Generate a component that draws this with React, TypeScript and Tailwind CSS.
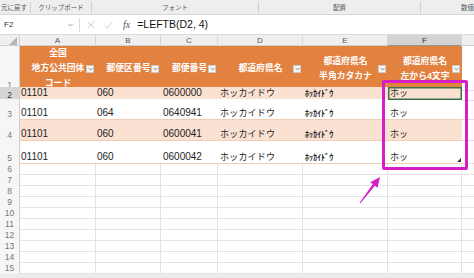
import React from "react";

const grid = "grid grid-cols-[20px_76px_65px_57px_85px_85px_74px_12px]";
const jp = "font-['Liberation_Sans','Noto_Sans_CJK_JP',sans-serif]";

type DataRow = { n: number; h: string; band: boolean; ku: string; zip: string };

const rows: DataRow[] = [
  { n: 2, h: "h-[12px]", band: true, ku: "060", zip: "0600000" },
  { n: 3, h: "h-[21px]", band: false, ku: "064", zip: "0640941" },
  { n: 4, h: "h-[21px]", band: true, ku: "060", zip: "0600041" },
  { n: 5, h: "h-[23px]", band: false, ku: "060", zip: "0600042" },
];

function Drop() {
  return (
    <span className="absolute right-[2px] top-1/2 -translate-y-1/2 w-[8px] h-[8px] bg-[#f7f7f7] border border-[#c9c9c9] flex items-center justify-center">
      <svg width="5" height="4" viewBox="0 0 5 4">
        <path d="M0.6 1 L2.5 2.9 L4.4 1" fill="none" stroke="#6b7a8c" strokeWidth="0.9" />
      </svg>
    </span>
  );
}

function Head({ children }: { children: React.ReactNode }) {
  return (
    <div className="relative flex items-center justify-center text-center text-white font-bold text-[8.8px] leading-[15px] whitespace-nowrap">
      <div>{children}</div>
      <Drop />
    </div>
  );
}

function RowNum({ n, sel, h }: { n: number | string; sel?: boolean; h?: string }) {
  return (
    <div className={`${h ?? ""} flex items-end justify-center text-[8.5px] leading-[11px] border-r border-[#cfcfcf] ${sel ? "bg-[#d6d6d6] text-[#333]" : "bg-[#f6f6f6] text-[#777]"}`}>
      {n}
    </div>
  );
}

export default function App() {
  const ribbon = [
    { w: "w-[31px]", label: "元に戻す", cls: "justify-start pl-[1px]" },
    { w: "w-[61px]", label: "クリップボード", cls: "justify-center" },
    { w: "w-[167px]", label: "フォント", cls: "justify-center" },
    { w: "w-[162px]", label: "配置", cls: "justify-center" },
    { w: "flex-1", label: "数値", cls: "justify-end pr-[0px]" },
  ];
  const letters = ["A", "B", "C", "D", "E", "F"];
  const empty = [6, 7, 8, 9, 10, 11, 12, 13, 14, 15];

  return (
    <div className={`relative w-[474px] h-[278px] overflow-hidden bg-white ${jp}`}>
      {/* ribbon group labels */}
      <div className="flex h-[15px] bg-[#eeeeee] border-b border-[#d6d6d6]">
        {ribbon.map((r, i) => (
          <div key={i} className={`${r.w} flex items-center ${r.cls} text-[6.5px] text-[#555] ${i < 4 ? "border-r border-[#cfcfcf]" : ""} mb-[1px] mt-[2px]`}>
            {r.label}
          </div>
        ))}
      </div>

      {/* formula bar */}
      <div className="flex items-center h-[20px] bg-white border-b border-[#dcdcdc]">
        <div className="w-[79px] flex items-center justify-between pl-[4px] pr-[6px] text-[8px] text-[#333]">
          <span>F2</span>
          <svg width="5" height="4" viewBox="0 0 5 4">
            <path d="M0.5 1 L2.5 3 L4.5 1" fill="none" stroke="#888" strokeWidth="0.8" />
          </svg>
        </div>
        <div className="w-px h-[14px] bg-[#dddddd]" />
        <div className="flex items-center gap-[9px] pl-[7px]">
          <svg width="8" height="8" viewBox="0 0 8 8">
            <path d="M0.5 0.5 L7.5 7.5 M7.5 0.5 L0.5 7.5" stroke="#c8c8c8" strokeWidth="0.9" />
          </svg>
          <svg width="9" height="8" viewBox="0 0 9 8">
            <path d="M0.5 4.5 L3.2 7.2 L8.5 0.5" fill="none" stroke="#c8c8c8" strokeWidth="0.9" />
          </svg>
          <span className="ml-[1px] font-['Liberation_Serif',serif] italic text-[10px] text-[#555]">fx</span>
        </div>
        <div className="pl-[7px] text-[10.5px] text-[#111] font-['Liberation_Sans',sans-serif]">=LEFTB(D2, 4)</div>
      </div>

      {/* column letters */}
      <div className={`${grid} h-[11px] bg-[#efefef] border-b border-[#d0d0d0] text-[8px] leading-[11px] text-[#555]`}>
        <div className="relative border-r border-[#d0d0d0]">
          <span className="absolute right-[2px] bottom-[1px] w-0 h-0 border-l-[8px] border-l-transparent border-b-[8px] border-b-[#b5b5b5]" />
        </div>
        {letters.map((l) => (
          <div key={l} className={`text-center border-r border-[#d8d8d8] ${l === "F" ? "bg-[#d3d3d3] text-[#333] shadow-[inset_0_-1px_0_#8f9a90]" : ""}`}>
            {l}
          </div>
        ))}
        <div />
      </div>

      {/* header row 1 */}
      <div className={`${grid} h-[41px]`}>
        <RowNum n={1} />
        <div className="col-span-6 grid grid-cols-[76px_65px_57px_85px_85px_74px] bg-[#e3813f]">
          <Head>全国<br />地方公共団体<br />コード</Head>
          <Head>郵便区番号</Head>
          <Head>郵便番号</Head>
          <Head>都道府県名</Head>
          <Head>都道府県名<br />半角カタカナ</Head>
          <Head>都道府県名<br />左から4文字</Head>
        </div>
        <div className="border-b border-[#e2e2e2]" />
      </div>

      {/* data rows */}
      {rows.map((r) => (
        <div key={r.n} className={`${grid} ${r.h}`}>
          <RowNum n={r.n} sel={r.n === 2} />
          <div className={`col-span-6 grid grid-cols-[76px_65px_57px_85px_85px_74px] border-b border-[#f1cdb6] text-[10px] leading-[12px] text-[#1e1e1e] ${r.band ? "bg-[#fae1d2]" : "bg-white"}`}>
            <div className="flex items-end pl-[1px] pb-[0.5px]">01101</div>
            <div className="flex items-end pl-[1px] pb-[0.5px]">{r.ku}</div>
            <div className="flex items-end pl-[2px] pb-[0.5px]">{r.zip}</div>
            <div className="flex items-end pl-[2px] pb-[0.5px] text-[9px] tracking-[0.2px]">ホッカイドウ</div>
            <div className="flex items-end pl-[2px] pb-[0.5px] text-[8.5px] font-bold scale-x-[0.95] origin-left">ﾎｯｶｲﾄﾞｳ</div>
            <div className={`relative flex items-end pl-[2px] pb-[0.5px] text-[9px] ${r.n === 2 ? "shadow-[inset_0_0_0_1.5px_#3a7049]" : ""}`}>
              ホッ
              {r.n === 5 ? <span className="absolute right-[1px] bottom-[1px] w-0 h-0 border-l-[4px] border-l-transparent border-b-[4px] border-b-[#333]" /> : null}
            </div>
          </div>
          <div className="border-b border-[#e2e2e2]" />
        </div>
      ))}

      {/* empty rows */}
      {empty.map((n) => (
        <div key={n} className={`${grid} h-[11px]`}>
          <RowNum n={n} />
          {letters.map((l) => (
            <div key={l} className="border-r border-b border-[#e3e3e3]" />
          ))}
          <div className="border-b border-[#e3e3e3]" />
        </div>
      ))}

      {/* bottom strip */}
      <div className="h-[4px] bg-[#ececec]" />

      {/* annotation: magenta box */}
      <div className="absolute left-[382px] top-[80px] w-[86px] h-[90px] border-[3.5px] border-[#d61ec6] rounded-[2px] pointer-events-none" />

      {/* annotation: arrow */}
      <svg className="absolute left-0 top-0 pointer-events-none" width="474" height="278" viewBox="0 0 474 278">
        <polygon
          points="359.6,202.7 372.9,184.1 370.3,182.2 380,177 377.5,187.7 374.9,185.7 360.4,203.3"
          fill="#d61ec6"
        />
      </svg>
    </div>
  );
}
